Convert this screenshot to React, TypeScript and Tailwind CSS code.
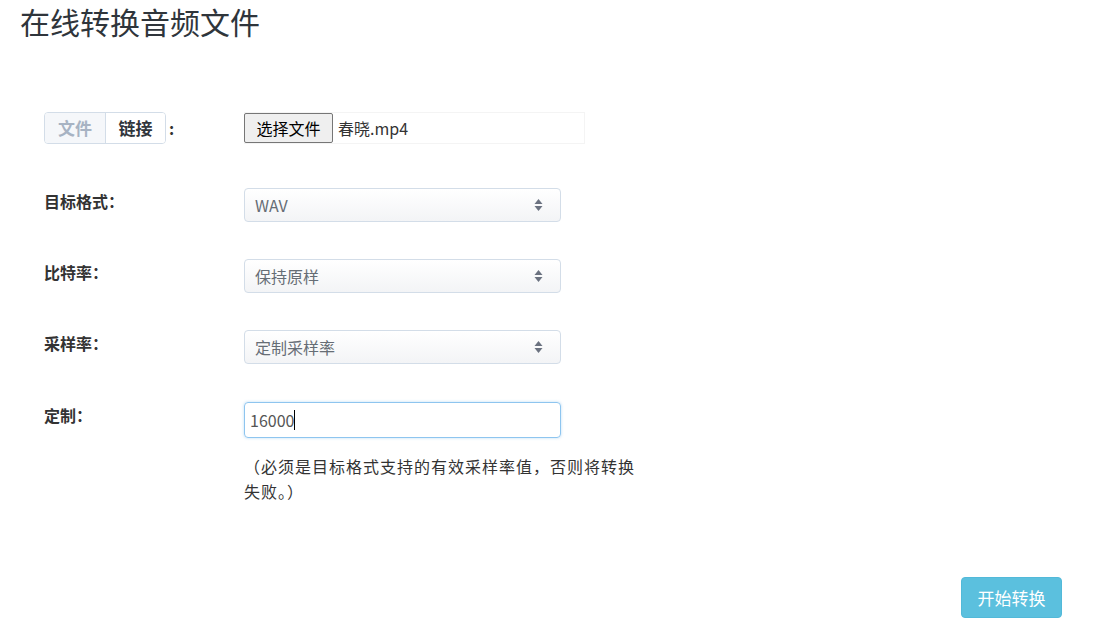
import React from "react";

const font = { fontFamily: '"Noto Sans CJK SC", "Noto Sans", sans-serif' };

function Arrows() {
  return (
    <svg width="9" height="14" viewBox="0 0 9 14" className="text-[#6b7280]">
      <path d="M4.5 1 L8.5 6 L0.5 6 Z" fill="currentColor" />
      <path d="M4.5 13 L8.5 8 L0.5 8 Z" fill="currentColor" />
    </svg>
  );
}

function Select({ value }: { value: string }) {
  return (
    <div className="w-[317px] h-[34px] rounded-[4px] border border-[#d3dde8] bg-gradient-to-b from-white to-[#f3f4f6] flex items-center justify-between pl-[10px] pr-[17px] text-[16px] text-[#666d75]">
      <span>{value}</span>
      <Arrows />
    </div>
  );
}

function Row({ label, children }: { label: string; children: React.ReactNode }) {
  return (
    <div className="flex items-start">
      <div className="w-[200px] pt-[1px] text-[16px] font-bold text-[#333]">{label}</div>
      <div>{children}</div>
    </div>
  );
}

export default function App() {
  return (
    <div className="w-[1097px] h-[632px] bg-white text-[#333] flex flex-col" style={font}>
      <h1 className="pl-[20px] pt-[3px] text-[30px] leading-[36px] font-normal text-[#2f353b]">在线转换音频文件</h1>
      <div className="pl-[44px] pt-[73px] flex flex-col">
        <div className="flex items-start">
          <div className="w-[200px] flex items-center">
            <div className="flex h-[32px] rounded-[4px] border border-[#d3dde8] overflow-hidden text-[17px] font-bold">
              <div className="w-[61px] flex items-center justify-center bg-[#f5f7fa] text-[#a7b3c3] border-r border-[#d3dde8]">文件</div>
              <div className="w-[59px] flex items-center justify-center bg-white text-[#2f353b]">链接</div>
            </div>
            <span className="ml-[3px] text-[16px] font-bold">:</span>
          </div>
          <div className="w-[341px] h-[32px] border border-[#f4f4f4] flex items-center">
            <span className="h-[30px] w-[89px] flex items-center justify-center border border-[#767676] rounded-[2px] bg-[#efefef] text-[16px] text-black -ml-px">选择文件</span>
            <span className="ml-[5px] text-[16px] text-[#333]">春晓.mp4</span>
          </div>
        </div>
        <div className="mt-[44px] flex flex-col gap-[37px]">
          <Row label="目标格式：">
            <Select value="WAV" />
          </Row>
          <Row label="比特率：">
            <Select value="保持原样" />
          </Row>
          <Row label="采样率：">
            <Select value="定制采样率" />
          </Row>
        </div>
        <div className="mt-[38px]">
          <Row label="定制：">
            <div className="w-[317px] h-[36px] rounded-[4px] border border-[#8ec5ef] shadow-[0_0_3px_rgba(102,175,233,0.45)] flex items-center pl-[5px] text-[16px] text-[#555]">
              16000<span className="w-px h-[20px] bg-black"></span>
            </div>
            <p className="mt-[16px] w-[404px] text-[16px] leading-[25px] tracking-[1px] text-[#333]">（必须是目标格式支持的有效采样率值，否则将转换失败。）</p>
          </Row>
        </div>
      </div>
      <div className="flex-1"></div>
      <div className="flex justify-end pr-[35px] pb-[14px]">
        <button className="w-[101px] h-[41px] rounded-[4px] bg-[#5bc0de] border border-[#52b9d9] text-white text-[17px]">开始转换</button>
      </div>
    </div>
  );
}
